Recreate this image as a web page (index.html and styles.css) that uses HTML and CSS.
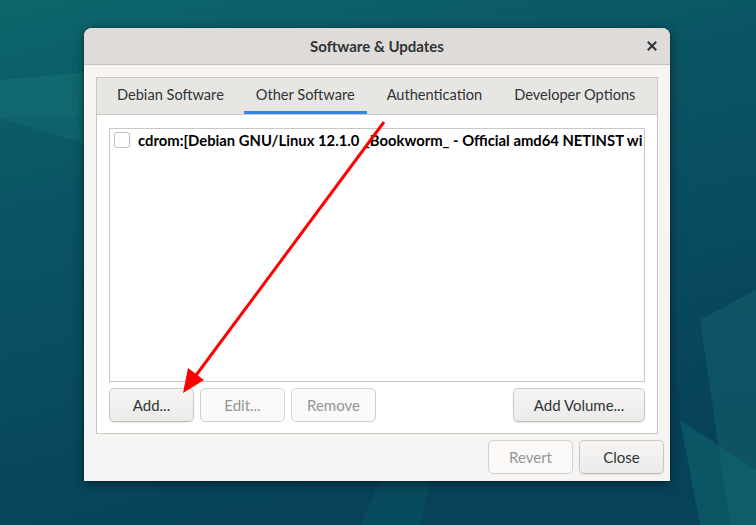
FILE: index.html
```html
<!DOCTYPE html>
<html>
<head>
<meta charset="utf-8">
<link rel="stylesheet" href="styles.css">
</head>
<body>
<div class="desktop">
  <svg class="wallpaper" width="756" height="525" viewBox="0 0 756 525">
    <defs>
      <linearGradient id="bg" x1="0" y1="0" x2="0.35" y2="1">
        <stop offset="0" stop-color="#0d676b"/>
        <stop offset="0.35" stop-color="#0a5565"/>
        <stop offset="1" stop-color="#07425a"/>
      </linearGradient>
    </defs>
    <rect width="756" height="525" fill="url(#bg)"/>
    <polygon points="0,80 90,72 90,145 0,118" fill="#1a7f7c" opacity="0.35"/>
    <polygon points="0,118 90,118 90,145" fill="#0e5f68" opacity="0.4"/>
    <polygon points="700,320 756,290 756,525 730,525" fill="#1d6f78" opacity="0.35"/>
    <polygon points="680,420 756,470 756,525 700,525" fill="#0e6a6e" opacity="0.5"/>
    <polygon points="360,525 380,481 430,481 420,525" fill="#0d5a64" opacity="0.4"/>
  </svg>
  <div class="window">
    <div class="titlebar">
      <span class="title">Software &amp; Updates</span>
      <span class="close">
        <svg width="10" height="10" viewBox="0 0 10 10"><path d="M1.5 1.5 L8.5 8.5 M8.5 1.5 L1.5 8.5" stroke="#2e3436" stroke-width="2" stroke-linecap="square"/></svg>
      </span>
    </div>
    <div class="body">
      <div class="notebook">
        <div class="tabs">
          <div class="tab">Debian Software</div>
          <div class="tab active">Other Software</div>
          <div class="tab">Authentication</div>
          <div class="tab">Developer Options</div>
        </div>
        <div class="page">
          <div class="list">
            <div class="row">
              <span class="check"></span>
              <span class="source">cdrom:[Debian GNU/Linux 12.1.0 _Bookworm_ - Official amd64 NETINST wi</span>
            </div>
          </div>
          <div class="actions">
            <button class="btn">Add...</button>
            <button class="btn disabled">Edit...</button>
            <button class="btn disabled">Remove</button>
            <span class="spacer"></span>
            <button class="btn wide">Add Volume...</button>
          </div>
        </div>
      </div>
      <div class="footer">
        <button class="btn disabled">Revert</button>
        <button class="btn">Close</button>
      </div>
    </div>
  </div>
  <svg class="arrow" width="756" height="525" viewBox="0 0 756 525">
    <line x1="384" y1="122" x2="194" y2="378" stroke="#ff0000" stroke-width="3"/>
    <polygon points="183,393 188,368 204,380" fill="#ff0000"/>
  </svg>
</div>
</body>
</html>
```
FILE: styles.css
```css
html, body {
  margin: 0;
  padding: 0;
}
body {
  font-family: Lato, "Noto Sans", sans-serif;
  color: #2e3436;
}
.desktop {
  position: relative;
  width: 756px;
  height: 525px;
  overflow: hidden;
  padding: 28px 0 0 84px;
  box-sizing: border-box;
}
.wallpaper {
  position: absolute;
  left: 0;
  top: 0;
}
.arrow {
  position: absolute;
  left: 0;
  top: 0;
  pointer-events: none;
}
.window {
  position: relative;
  width: 586px;
  height: 453px;
  border-radius: 8px 8px 0 0;
  background: #f6f5f4;
  box-shadow: 0 3px 12px rgba(0,0,0,0.45), 0 0 0 1px rgba(0,0,0,0.15);
  display: flex;
  flex-direction: column;
  overflow: hidden;
}
.titlebar {
  height: 36px;
  flex: none;
  background: #dedbd8;
  border-bottom: 1px solid #c7c2bd;
  display: flex;
  align-items: center;
  justify-content: center;
  position: relative;
}
.title {
  font-weight: bold;
  font-size: 15px;
  color: #2e3436;
}
.close {
  position: absolute;
  right: 13px;
  top: 13px;
  width: 10px;
  height: 10px;
  display: flex;
}
.body {
  flex: 1;
  padding: 12px 6px 7px 12px;
  display: flex;
  flex-direction: column;
}
.notebook {
  width: 562px;
  height: 357px;
  flex: none;
  border: 1px solid #cdc7c2;
  display: flex;
  flex-direction: column;
  box-sizing: border-box;
}
.tabs {
  height: 37px;
  flex: none;
  background: #e8e6e3;
  border-bottom: 1px solid #cdc7c2;
  display: flex;
  gap: 8px;
  padding-left: 8px;
  box-sizing: border-box;
}
.tab {
  flex: none;
  white-space: nowrap;
  padding: 0 12px;
  font-size: 14.6px;
  color: #2e3436;
  display: flex;
  align-items: center;
  box-sizing: border-box;
  border-bottom: 3px solid transparent;
}
.tab.active {
  border-bottom-color: #3584e4;
}
.page {
  flex: 1;
  background: #ffffff;
  padding: 13px 12px 11px 12px;
  display: flex;
  flex-direction: column;
}
.list {
  height: 254px;
  flex: none;
  border: 1px solid #cdc7c2;
  background: #ffffff;
  box-sizing: border-box;
  overflow: hidden;
}
.row {
  display: flex;
  align-items: center;
  height: 22px;
  padding: 0 0 0 4px;
  box-sizing: border-box;
  overflow: hidden;
}
.check {
  flex: none;
  width: 16px;
  height: 16px;
  border: 1px solid #c0bbb6;
  border-radius: 3px;
  box-sizing: border-box;
  background: #ffffff;
  margin-right: 8px;
}
.source {
  white-space: nowrap;
  font-weight: bold;
  font-size: 14.8px;
  color: #000000;
}
.actions {
  display: flex;
  gap: 6px;
  margin-top: 6px;
}
.spacer {
  flex: 1;
}
.btn {
  width: 85px;
  height: 34px;
  font-family: inherit;
  font-size: 15px;
  color: #2e3436;
  background: linear-gradient(#f6f5f4, #edebe9);
  border: 1px solid #cdc7c2;
  border-bottom-color: #bfb8b1;
  border-radius: 5px;
  box-shadow: 0 1px 2px rgba(0,0,0,0.07);
  padding: 0;
}
.btn.wide {
  width: 132px;
}
.btn.disabled {
  background: #faf9f8;
  border-color: #d5d0cc;
  color: #929595;
  box-shadow: none;
}
.footer {
  margin-top: auto;
  display: flex;
  justify-content: flex-end;
  gap: 6px;
}
```
